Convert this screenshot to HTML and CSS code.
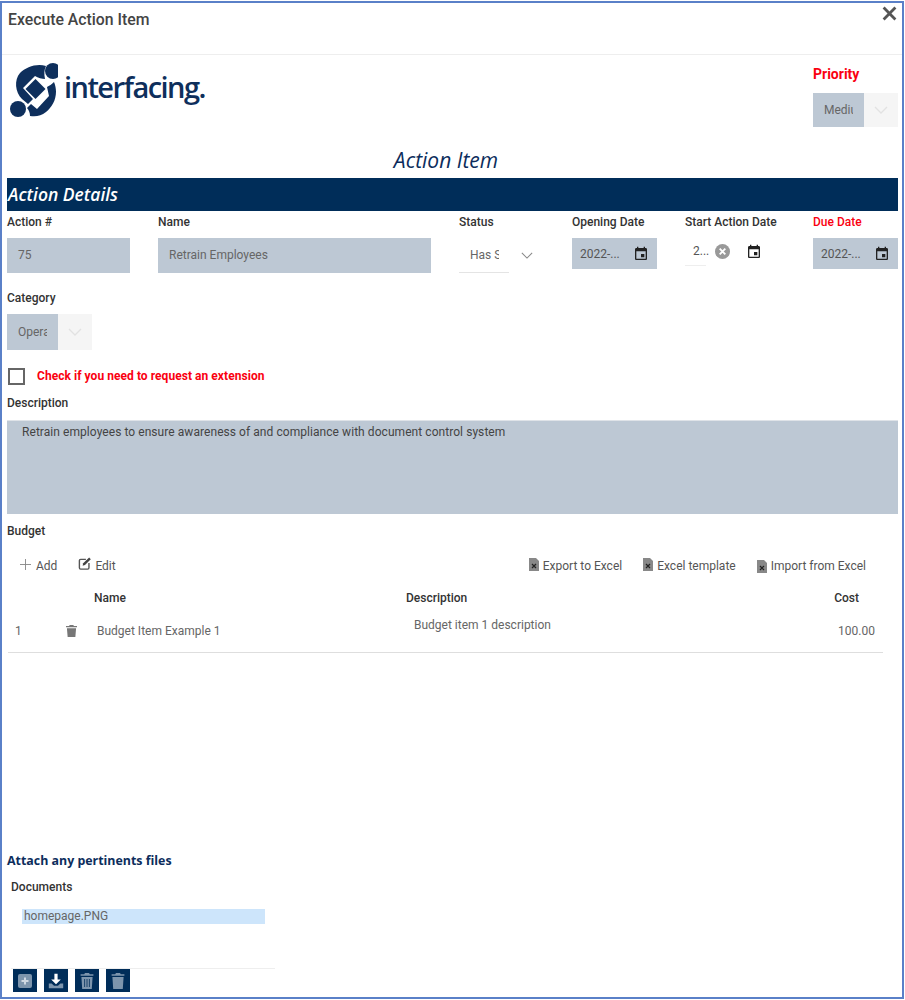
FILE: index.html
```html
<!DOCTYPE html>
<html lang="en">
<head>
<meta charset="utf-8">
<title>Execute Action Item</title>
<link rel="stylesheet" href="styles.css">
</head>
<body>
<div class="frame">
  <header class="dialog-head">
    <h1>Execute Action Item</h1>
    <svg class="close" viewBox="0 0 14 14"><path d="M1.500 1.500l11 11M12.500 1.500l-11 11"/></svg>
  </header>

  <section class="brand-row">
    <div class="logo">
      <svg class="logo-mark" viewBox="10 62 48 58">
        <circle cx="53" cy="71" r="8"/>
        <circle cx="18" cy="109" r="8"/>
        <path d="M46 66C37 63 26 67 20 73C14 80 15 92 22 99L28 104L33 99L23 88L35 76C38 78 42 79 45 79C44 74 44 70 46 66Z"/>
        <path d="M35.500 79L45.500 89L35.500 99L25.500 89Z"/>
        <path d="M54 82C59 94 54 106 46 112C41 116 36 117 30 116C30 113 29 110 27 108L31 104L37 109L49 96L47 87C49 86 52 84 54 82Z"/>
      </svg>
      <span class="wordmark">interfacing.</span>
    </div>
    <div class="priority">
      <label class="label-red priority-label">Priority</label>
      <div class="combo">
        <span class="combo-value"><span class="clip">Medium</span></span>
        <span class="combo-btn"><svg class="chev-light" viewBox="0 0 14 8"><path d="M1 1l6 6 6-6"/></svg></span>
      </div>
    </div>
  </section>

  <h2 class="form-title">Action Item</h2>
  <div class="section-bar">Action Details</div>

  <section class="fields">
    <div class="field">
      <label>Action #</label>
      <div class="input">75</div>
    </div>
    <div class="field">
      <label>Name</label>
      <div class="input">Retrain Employees</div>
    </div>
    <div class="field">
      <label>Status</label>
      <div class="status">
        <span class="status-value"><span class="clip">Has Started</span></span>
        <svg class="chev" viewBox="0 0 14 8"><path d="M1 1l6 6 6-6"/></svg>
      </div>
    </div>
    <div class="field">
      <label>Opening Date</label>
      <div class="date">
        <span class="date-value">2022-...</span>
        <svg class="cal" viewBox="0 0 24 24"><path d="M17 12h-5v5h5v-5zM16 1v2H8V1H6v2H5c-1.110 0-1.990.9-1.990 2L3 19c0 1.100.89 2 2 2h14c1.100 0 2-.9 2-2V5c0-1.100-.9-2-2-2h-1V1h-2zm3 18H5V8h14v11z"/></svg>
      </div>
    </div>
    <div class="field">
      <label>Start Action Date</label>
      <div class="date-open">
        <span class="date-open-value">2...</span>
        <svg class="clear" viewBox="0 0 16 16"><circle cx="8" cy="8" r="8"/><path d="M5 5l6 6M11 5l-6 6"/></svg>
        <svg class="cal" viewBox="0 0 24 24"><path d="M17 12h-5v5h5v-5zM16 1v2H8V1H6v2H5c-1.110 0-1.990.9-1.990 2L3 19c0 1.100.89 2 2 2h14c1.100 0 2-.9 2-2V5c0-1.100-.9-2-2-2h-1V1h-2zm3 18H5V8h14v11z"/></svg>
      </div>
    </div>
    <div class="field">
      <label class="label-red">Due Date</label>
      <div class="date">
        <span class="date-value">2022-...</span>
        <svg class="cal" viewBox="0 0 24 24"><path d="M17 12h-5v5h5v-5zM16 1v2H8V1H6v2H5c-1.110 0-1.990.9-1.990 2L3 19c0 1.100.89 2 2 2h14c1.100 0 2-.9 2-2V5c0-1.100-.9-2-2-2h-1V1h-2zm3 18H5V8h14v11z"/></svg>
      </div>
    </div>
  </section>

  <section class="category">
    <label>Category</label>
    <div class="combo combo-cat">
      <span class="combo-value"><span class="clip">Operations</span></span>
      <span class="combo-btn"><svg class="chev-light" viewBox="0 0 14 8"><path d="M1 1l6 6 6-6"/></svg></span>
    </div>
  </section>

  <div class="check-row">
    <span class="checkbox"></span>
    <span class="check-text">Check if you need to request an extension</span>
  </div>

  <section class="description">
    <label>Description</label>
    <div class="textarea">Retrain employees to ensure awareness of and compliance with document control system</div>
  </section>

  <section class="budget">
    <label>Budget</label>
    <div class="toolbar">
      <span class="tool tool-add"><svg class="plus" viewBox="0 0 12 12"><path d="M6 0v12M0 6h12"/></svg>Add</span>
      <span class="tool tool-edit"><svg class="edit" viewBox="0 0 14 14"><path class="edit-pen" d="M12 .5L13.800 2.300 7.500 8.700 5 9.300 5.600 6.800z"/><path class="edit-box" d="M8.500 2.500H2.800C2 2.500 1.500 3 1.500 3.800v7.900c0 .8.500 1.300 1.300 1.300h7.700c.8 0 1.300-.5 1.300-1.300V6.500"/></svg>Edit</span>
      <span class="tool-spacer"></span>
      <span class="tool tool-export"><svg class="xls" viewBox="0 0 10 13"><path d="M0 0h7l3 3v10H0z"/><path class="xls-x" d="M3 6l4 4M7 6l-4 4"/></svg>Export to Excel</span>
      <span class="tool tool-template"><svg class="xls" viewBox="0 0 10 13"><path d="M0 0h7l3 3v10H0z"/><path class="xls-x" d="M3 6l4 4M7 6l-4 4"/></svg>Excel template</span>
      <span class="tool tool-import"><svg class="xls xls-low" viewBox="0 0 10 13"><path d="M0 0h7l3 3v10H0z"/><path class="xls-x" d="M3 6l4 4M7 6l-4 4"/></svg>Import from Excel</span>
    </div>
    <div class="table">
      <div class="thead">
        <span class="th-name">Name</span>
        <span class="th-desc">Description</span>
        <span class="th-cost">Cost</span>
      </div>
      <div class="tbody">
        <span class="td-num">1</span>
        <svg class="trash" viewBox="0 0 12 13"><path d="M4 0h4l.6 1H12v1.500H0V1h3.400zM1 3.500h10L10.200 13H1.800z"/></svg>
        <span class="td-name">Budget Item Example 1</span>
        <span class="td-desc">Budget item 1 description</span>
        <span class="td-cost">100.00</span>
      </div>
    </div>
  </section>

  <section class="attach">
    <h3>Attach any pertinents files</h3>
    <label class="docs-label">Documents</label>
    <div class="doc-list"><div class="doc-item">homepage.PNG</div></div>
    <div class="doc-actions">
      <span class="doc-btn"><svg viewBox="0 0 16 16"><rect class="soft" x="1" y="1" width="14" height="14" rx="2"/><path class="glyph" d="M7 4.500h2V7h2.500v2H9v2.500H7V9H4.500V7H7z"/></svg></span>
      <span class="doc-btn"><svg viewBox="0 0 20 20"><path class="white" d="M8 1h4v7h4l-6 6-6-6h4z"/><path class="soft" d="M1 13h3.500l3 3h5l3-3H19v6H1z"/></svg></span>
      <span class="doc-btn"><svg viewBox="0 0 16 20"><path class="soft" d="M5.500 0h5l1 1.500H16v2H0v-2h4.500zM1 5h14l-1 15H2z"/><path class="stripe" d="M5 7.500v10M8 7.500v10M11 7.500v10"/></svg></span>
      <span class="doc-btn"><svg viewBox="0 0 16 20"><path class="soft" d="M5.500 0h5l1 1.500H16v2H0v-2h4.500zM1 5h14l-1 15H2z"/></svg></span>
    </div>
  </section>
</div>
</body>
</html>
```

FILE: styles.css
```css
* { box-sizing: border-box; }
html, body { margin: 0; padding: 0; background: #fff; }
body { font-family: Roboto, "Liberation Sans", sans-serif; color: #333; }
label { display: block; font-size: 12px; font-weight: 500; color: #333; line-height: 14px; }
.label-red { color: #fa0010; }

.frame {
  width: 904px; height: 998px; margin-top: 1px;
  border: 2px solid #5a80c8;
  overflow: hidden;
}

.dialog-head {
  height: 52px; padding: 8px 0 0 6px;
  display: flex; justify-content: space-between; align-items: flex-start;
  border-bottom: 1px solid #eeeeee;
}
.dialog-head h1 { margin: 0; font-size: 15.800px; line-height: 18px; font-weight: 500; color: #444; }
.close { width: 15px; height: 15px; margin: -5px 5px 0 0; fill: none; stroke: #555; stroke-width: 2.600; }

.brand-row { height: 91px; display: flex; justify-content: space-between; padding-left: 8px; }
.logo { display: flex; align-items: flex-start; height: 64px; padding-top: 7px; }
.logo-mark { width: 48px; height: 58px; fill: #0e2f5c; }
.wordmark {
  font-family: "Open Sans", sans-serif; font-weight: 600; font-size: 29px; line-height: 40px;
  color: #0e2f5c; margin: 5px 0 0 6px; letter-spacing: -1.550px;
}
.priority { width: 85px; margin-right: 4px; padding-top: 11px; }
.priority-label { font-size: 14px; line-height: 17px; font-weight: 700; }
.combo { display: flex; height: 34px; width: 85px; margin-top: 10px; }
.combo-value {
  width: 51px; background: #bdc8d4; color: #666; font-size: 12px; line-height: 34px;
  padding: 0 11px; white-space: nowrap;
}
.combo-btn { flex: 1; background: #f5f5f5; display: flex; align-items: center; justify-content: center; }
.chev-light { width: 14px; height: 8px; fill: none; stroke: #e2e2e2; stroke-width: 1.300; }

.form-title {
  margin: 0; height: 32px; padding-right: 12px; text-align: center; font-family: "Open Sans", sans-serif;
  font-style: italic; font-weight: 400; font-size: 21px; line-height: 29px; color: #0c2d5c;
}
.section-bar {
  margin-left: 5px; width: 891px; height: 33px; background: #002d59; color: #fff;
  font-family: "Open Sans", sans-serif; font-style: italic; font-weight: 600; font-size: 17.500px;
  line-height: 33px; padding-left: 1px;
}

.fields {
  display: grid; grid-template-columns: 151px 301px 113px 113px 128px 85px;
  margin-left: 5px; padding-top: 4px; height: 80px;
}
.field label { height: 23px; }
.input {
  height: 35px; background: #bdc8d4; color: #666; font-size: 12px; line-height: 35px; padding-left: 11px;
}
.field:nth-child(1) .input { width: 123px; }
.field:nth-child(2) .input { width: 273px; }

.status { display: flex; height: 35px; align-items: center; }
.status-value {
  width: 50px; height: 35px; border-bottom: 1px solid #e4e4e4; padding: 0 10px 0 11px; line-height: 34px;
  font-size: 12px; color: #666;
}
.clip { display: block; overflow: hidden; white-space: nowrap; }
.chev { width: 12px; height: 7px; margin-left: 12px; fill: none; stroke: #888; stroke-width: 1.200; }

.date {
  width: 85px; height: 31px; background: #bdc8d4; display: flex; align-items: center; justify-content: space-between;
  padding: 0 8px; color: #555; font-size: 12px;
}
.cal { width: 16px; height: 16px; fill: #222; flex: none; }
.date-open { display: flex; align-items: flex-start; height: 30px; }
.date-open-value {
  width: 21px; height: 28px; border-bottom: 1px solid #eeeeee; padding-left: 8px; font-size: 12px;
  color: #555; line-height: 27px;
}
.clear { width: 15px; height: 15px; margin: 6px 0 0 9px; fill: #999; stroke: #fff; stroke-width: 2; flex: none; }
.clear circle { stroke: none; }
.date-open .cal { margin: 6px 0 0 16px; }

.category { margin-left: 5px; height: 77px; }
.category label { height: 23px; }
.combo-cat { margin-top: 0; height: 36px; width: 85px; }
.combo-cat .combo-value { line-height: 36px; }

.check-row { display: flex; align-items: center; margin: -1px 0 0 6px; height: 18px; }
.checkbox { width: 17px; height: 17px; border: 2px solid #666; flex: none; }
.check-text { margin-left: 12px; font-size: 12px; font-weight: 700; color: #fa0010; letter-spacing: .05px; }

.description { margin: 11px 0 0 5px; }
.description label { height: 24px; }
.textarea {
  width: 891px; height: 94px; background: #bdc8d4; border-top: 1px solid #dfe3e8; padding: 4px 15px;
  font-size: 12px; line-height: 15px; color: #444; letter-spacing: .06px;
}

.budget { margin: 10px 0 0 5px; }
.budget > label { height: 14px; }
.toolbar {
  display: flex; align-items: center; height: 24px; margin-top: 16px; font-size: 12px; color: #555; padding-left: 13px;
}
.tool { display: inline-flex; align-items: center; white-space: nowrap; }
.tool-spacer { flex: 1; }
.tool-edit { margin-left: 21px; }
.tool-template { margin-left: 21px; }
.tool-import { margin-left: 21px; margin-right: 36px; }
.plus { width: 11px; height: 11px; margin: -4px 5px 0 0; fill: none; stroke: #888; stroke-width: 1; }
.edit { width: 13px; height: 13px; margin: -5px 4px 0 0; }
.edit-pen { fill: #444; }
.edit-box { fill: none; stroke: #555; stroke-width: 1.500; }
.xls { width: 10px; height: 13px; margin: -3px 4px 0 0; fill: #888; }
.xls-low { margin-top: 1px; }
.xls-x { fill: none; stroke: #222; stroke-width: 1.200; }

.table { width: 875px; margin-left: 1px; }
.thead {
  display: grid; grid-template-columns: 86px 312px 1fr 36px; height: 22px; font-size: 12px; font-weight: 500;
  color: #333; align-items: center; margin-top: 9px; padding-right: 24px;
}
.th-name { grid-column: 1 / 3; padding-left: 86px; }
.th-desc { grid-column: 3; }
.th-cost { grid-column: 4; text-align: right; }
.tbody {
  display: flex; align-items: center; height: 44px; padding-top: 1px; font-size: 12px; color: #666;
  border-bottom: 1px solid #dedede;
}
.td-num { width: 58px; padding-left: 7px; }
.trash { width: 11px; height: 12px; fill: #777; flex: none; margin-top: -1px; }
.td-name { width: 318px; padding-left: 20px; }
.td-desc { flex: 1; margin: -12px 0 0 19px; }
.td-cost { margin-right: 8px; }

.attach { margin: 200px 0 0 5px; }
.attach h3 { margin: 0; font-family: "Open Sans", sans-serif; font-size: 12.400px; line-height: 16px; font-weight: 700; color: #0c2d5c; }
.docs-label { margin: 11px 0 0 4px; }
.doc-list { height: 75px; width: 264px; margin-left: 4px; padding: 15px 0 0 11px; border-bottom: 1px solid #eeeeee; }
.doc-item { width: 243px; height: 15px; background: #cde5fb; color: #666; font-size: 12px; line-height: 15px; padding-left: 2px; }
.doc-actions { display: flex; gap: 7px; margin: 0 0 0 6px; }
.doc-btn { width: 24px; height: 23px; background: #002d59; display: flex; align-items: center; justify-content: center; }
.doc-btn svg { width: 16px; height: 16px; }
.soft { fill: #7d95ad; }
.white { fill: #fff; }
.glyph { fill: #cfd8e2; }
.stripe { fill: none; stroke: #002d59; stroke-width: 1; }
```
